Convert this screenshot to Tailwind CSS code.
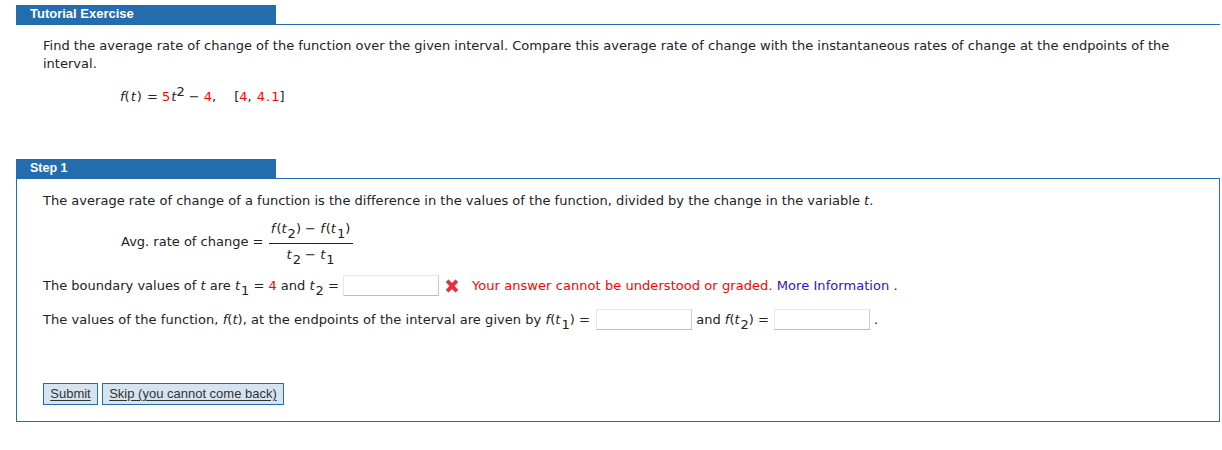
<!DOCTYPE html>
<html lang="en">
<head>
  <meta charset="UTF-8">
  <title>Tutorial Exercise</title>
  <script src="https://cdn.jsdelivr.net/npm/@tailwindcss/browser@4"></script>
</head>
<body class="bg-white text-[13px] leading-[18px] text-[#222] font-['DejaVu_Sans',sans-serif]">
  <div class="pt-[5px] pl-[16px] pr-[2px]">

    <!-- Tutorial section -->
    <div class="border-b border-[#236cad] h-[20px]">
      <div class="w-[260px] h-[20px] bg-[#236cad] pl-[14px] text-white font-bold text-[13px] leading-[18px] font-['Liberation_Sans',sans-serif]">Tutorial Exercise</div>
    </div>
    <div class="pl-[27px] pr-[40px] pt-[12px]">
      <p class="tracking-[0.01px]">Find the average rate of change of the function over the given interval. Compare this average rate of change with the instantaneous rates of change at the endpoints of the interval.</p>
      <p class="pl-[77px] mt-[15px] h-[18px] flex items-baseline whitespace-pre"><i>f</i>(<i class="px-[1px]">t</i>) <span class="ml-[1px]">= </span><span class="text-[#f00]">5</span><i class="ml-[1px]">t</i><sup class="text-[13px] top-[-5px]">2</sup><span class="ml-[4px]">− </span><span class="text-[#f00]">4</span>,<span class="ml-[18px]">[</span><span class="text-[#f00]">4</span>, <span class="ml-[1px] text-[#f00] tracking-[1px]">4.1</span><span class="ml-[-1px]">]</span></p>
    </div>

    <!-- Step 1 -->
    <div class="mt-[53px] w-[260px] h-[20px] bg-[#236cad] pl-[14px] text-white font-bold text-[12.5px] leading-[19px] font-['Liberation_Sans',sans-serif]">Step 1</div>
    <div class="-mt-[1px] border border-[#236cad] h-[244px] pl-[26px] pt-[13px]">
      <p class="tracking-[0.015px]">The average rate of change of a function is the difference in the values of the function, divided by the change in the variable <i>t</i>.</p>

      <div class="flex items-start pl-[78px] mt-[9px] h-[48px]">
        <span class="whitespace-pre mt-[14px]">Avg. rate of change = </span>
        <div class="ml-[1px] w-[84px] text-center">
          <div class="border-b border-[#222] h-[25px] pt-[1px]"><i class="mr-[1px]">f</i>(<i class="mr-[1px]">t</i><sub class="text-[13px] bottom-[-5px]">2</sub>) − <i class="mr-[1px]">f</i>(<i class="mr-[1px]">t</i><sub class="text-[13px] bottom-[-5px]">1</sub>)</div>
          <div class="h-[23px] leading-[22px]"><i class="mr-[1px]">t</i><sub class="text-[13px] bottom-[-5px]">2</sub> − <i class="mr-[1px]">t</i><sub class="text-[13px] bottom-[-5px]">1</sub></div>
        </div>
      </div>

      <div class="flex items-center mt-[8px] h-[22px] whitespace-pre">
        <span>The boundary values of <i>t</i> are <i class="mr-[1px]">t</i><sub class="text-[13px] bottom-[-5px]">1</sub> = <span class="text-[#f00]">4</span> and <i class="mr-[1px]">t</i><sub class="text-[13px] bottom-[-5px]">2</sub> = </span>
        <input type="text" class="mb-[2px] w-[96px] h-[21px] bg-white border border-[#e8e8e8] border-b-[#bbb] border-r-[#ccc]">
        <svg class="ml-[6px] w-[14px] h-[14px]" viewBox="0 0 14 14"><path d="M1 3 L3.5 .8 L7 4.2 L10.5 .8 L13 3 L9.5 7 L13 11 L10.5 13.2 L7 9.8 L3.5 13.2 L1 11 L4.5 7 Z" fill="#ee2b37" stroke="#b9444c" stroke-width="0.5"/></svg>
        <span class="ml-[13px] text-[#f00] tracking-[0.06px]">Your answer cannot be understood or graded. <a href="#" class="text-[#3311cc]">More Information</a> <span class="text-[#222]">.</span></span>
      </div>

      <div class="flex items-center mt-[12px] h-[22px] whitespace-pre">
        <span class="tracking-[0.05px]">The values of the function, <i>f</i>(<i>t</i>), at the endpoints of the interval are given by <i>f</i>(<i class="mr-[1px]">t</i><sub class="text-[13px] bottom-[-5px]">1</sub>) = </span>
        <input type="text" class="ml-[2px] mb-[2px] w-[96px] h-[21px] bg-white border border-[#e8e8e8] border-b-[#bbb] border-r-[#ccc]">
        <span class="ml-[4px]">and <i>f</i>(<i class="mr-[1px]">t</i><sub class="text-[13px] bottom-[-5px]">2</sub>) = </span>
        <input type="text" class="ml-[1px] mb-[2px] w-[96px] h-[21px] bg-white border border-[#e8e8e8] border-b-[#bbb] border-r-[#ccc]">
        <span class="ml-[4px]">.</span>
      </div>

      <div class="flex gap-[4px] mt-[52px] font-['Liberation_Sans',sans-serif] text-[13px] text-[#333]">
        <button class="w-[55px] h-[22px] bg-[#d6e4f0] border border-[#236cad] underline underline-offset-2">Submit</button>
        <button class="w-[182px] h-[22px] bg-[#d6e4f0] border border-[#236cad] underline underline-offset-2">Skip (you cannot come back)</button>
      </div>
    </div>
  </div>
</body>
</html>
